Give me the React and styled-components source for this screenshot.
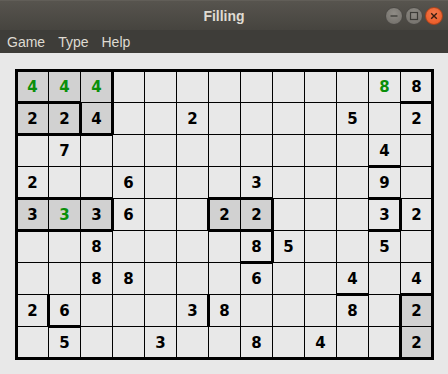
import React from "react";
import styled, { createGlobalStyle } from "styled-components";

const GlobalStyle = createGlobalStyle`
  html, body {
    margin: 0;
    padding: 0;
    background: #e8e8e8;
  }
  body {
    width: 448px;
    height: 374px;
    overflow: hidden;
    font-family: "Liberation Sans", Arial, sans-serif;
  }
`;

// "." empty, "*" after a digit = entered by the player (green)
const ROWS = [
  "4* 4* 4* . . . . . . . . 8* 8",
  "2 2 4 . . 2 . . . . 5 . 2",
  ". 7 . . . . . . . . . 4 .",
  "2 . . 6 . . . 3 . . . 9 .",
  "3 3* 3 6 . . 2 2 . . . 3 2",
  ". . 8 . . . . 8 5 . . 5 .",
  ". . 8 8 . . . 6 . . 4 . 4",
  "2 6 . . . 3 8 . . . 8 . 2",
  ". 5 . . 3 . . 8 . 4 . . 2",
];

const W = 13;
const H = ROWS.length;

function buildBoard() {
  const cells = ROWS.flatMap((row) =>
    row.split(" ").map((tok) => ({
      value: tok === "." ? 0 : parseInt(tok, 10),
      user: tok.endsWith("*"),
    }))
  );

  // group equal neighbouring numbers into regions
  const region = new Array(W * H).fill(-1);
  const sizes = [];
  cells.forEach((c, i) => {
    if (!c.value || region[i] !== -1) return;
    const id = sizes.length;
    const stack = [i];
    region[i] = id;
    let n = 0;
    while (stack.length) {
      const k = stack.pop();
      n++;
      const x = k % W;
      const y = Math.floor(k / W);
      [[x - 1, y], [x + 1, y], [x, y - 1], [x, y + 1]].forEach(([nx, ny]) => {
        if (nx < 0 || ny < 0 || nx >= W || ny >= H) return;
        const j = ny * W + nx;
        if (region[j] === -1 && cells[j].value === c.value) {
          region[j] = id;
          stack.push(j);
        }
      });
    }
    sizes.push(n);
  });

  const complete = (i) => region[i] !== -1 && sizes[region[i]] === cells[i].value;

  const thick = (x, y, nx, ny) => {
    if (nx < 0 || ny < 0 || nx >= W || ny >= H) return true;
    const a = y * W + x;
    const b = ny * W + nx;
    const va = cells[a].value;
    const vb = cells[b].value;
    if (va && region[a] === region[b]) return false;
    if (va && vb && va !== vb) return true;
    return complete(a) || complete(b);
  };

  return cells.map((c, i) => {
    const x = i % W;
    const y = Math.floor(i / W);
    return {
      ...c,
      done: complete(i),
      top: thick(x, y, x, y - 1),
      right: thick(x, y, x + 1, y),
      bottom: thick(x, y, x, y + 1),
      left: thick(x, y, x - 1, y),
    };
  });
}

const board = buildBoard();

export default function App() {
  return (
    <>
      <GlobalStyle />
      <Window>
        <TitleBar>
          <Title>Filling</Title>
          <Controls>
            <WinButton>
              <svg width="10" height="10" viewBox="0 0 10 10">
                <line x1="1.5" y1="5" x2="8.5" y2="5" stroke="#3c3b37" strokeWidth="1.3" />
              </svg>
            </WinButton>
            <WinButton>
              <svg width="10" height="10" viewBox="0 0 10 10">
                <rect x="1.5" y="1.5" width="7" height="7" fill="none" stroke="#3c3b37" strokeWidth="1.2" />
              </svg>
            </WinButton>
            <WinButton $close>
              <svg width="10" height="10" viewBox="0 0 10 10">
                <path d="M2.2 2.2 L7.8 7.8 M7.8 2.2 L2.2 7.8" stroke="#3a1d10" strokeWidth="1.4" />
              </svg>
            </WinButton>
          </Controls>
        </TitleBar>

        <MenuBar>
          <MenuItem>Game</MenuItem>
          <MenuItem>Type</MenuItem>
          <MenuItem>Help</MenuItem>
        </MenuBar>

        <Content>
          <Grid>
            {board.map((c, i) => (
              <Cell
                key={i}
                $done={c.done}
                $top={c.top}
                $right={c.right}
                $bottom={c.bottom}
                $left={c.left}
              >
                {c.value ? <Digit $user={c.user}>{c.value}</Digit> : null}
              </Cell>
            ))}
          </Grid>
        </Content>
      </Window>
    </>
  );
}

const Window = styled.div`
  width: 448px;
  height: 374px;
  display: flex;
  flex-direction: column;
  background: #e8e8e8;
`;

const TitleBar = styled.div`
  position: relative;
  height: 30px;
  display: flex;
  align-items: center;
  justify-content: center;
  background: linear-gradient(#57544e, #46443f);
  border-top: 1px solid #615e58;
  box-sizing: border-box;
`;

const Title = styled.div`
  color: #dfdbd2;
  font-family: "Liberation Sans", Arial, sans-serif;
  font-weight: bold;
  font-size: 14px;
  margin-top: 1px;
`;

const Controls = styled.div`
  position: absolute;
  right: 5px;
  top: 6px;
  display: flex;
  gap: 2px;
`;

const WinButton = styled.div`
  width: 18px;
  height: 18px;
  border-radius: 50%;
  box-sizing: border-box;
  display: flex;
  align-items: center;
  justify-content: center;
  border: 1px solid ${(p) => (p.$close ? "#a9431c" : "#4a4844")};
  background: ${(p) =>
    p.$close
      ? "radial-gradient(circle at 50% 35%, #f47a4c, #e9541f)"
      : "radial-gradient(circle at 50% 35%, #8f8c86, #6f6c67)"};
`;

const MenuBar = styled.div`
  height: 23px;
  display: flex;
  align-items: center;
  gap: 13px;
  padding-left: 7px;
  background: #3e3d39;
`;

const MenuItem = styled.span`
  color: #dfdbd2;
  font-size: 14px;
  font-family: "Liberation Sans", Arial, sans-serif;
`;

const Content = styled.div`
  flex: 1;
  padding: 16px 0 0 15px;
`;

const Grid = styled.div`
  display: inline-grid;
  grid-template-columns: repeat(13, 31px);
  grid-auto-rows: 31px;
  gap: 1px;
  padding: 1px;
  border: 1px solid #000;
  background: #000;
`;

const Cell = styled.div`
  display: flex;
  align-items: center;
  justify-content: center;
  background: ${(p) => (p.$done ? "#d1d1d1" : "#e8e8e8")};
  box-shadow: ${(p) =>
    [
      p.$top && "inset 0 1px 0 #000",
      p.$bottom && "inset 0 -1px 0 #000",
      p.$left && "inset 1px 0 0 #000",
      p.$right && "inset -1px 0 0 #000",
    ]
      .filter(Boolean)
      .join(", ") || "none"};
`;

const Digit = styled.span`
  font-family: "DejaVu Sans", "Liberation Sans", sans-serif;
  font-weight: bold;
  font-size: 15px;
  line-height: 1;
  margin-top: 2px;
  color: ${(p) => (p.$user ? "#0a8f0a" : "#000")};
`;
